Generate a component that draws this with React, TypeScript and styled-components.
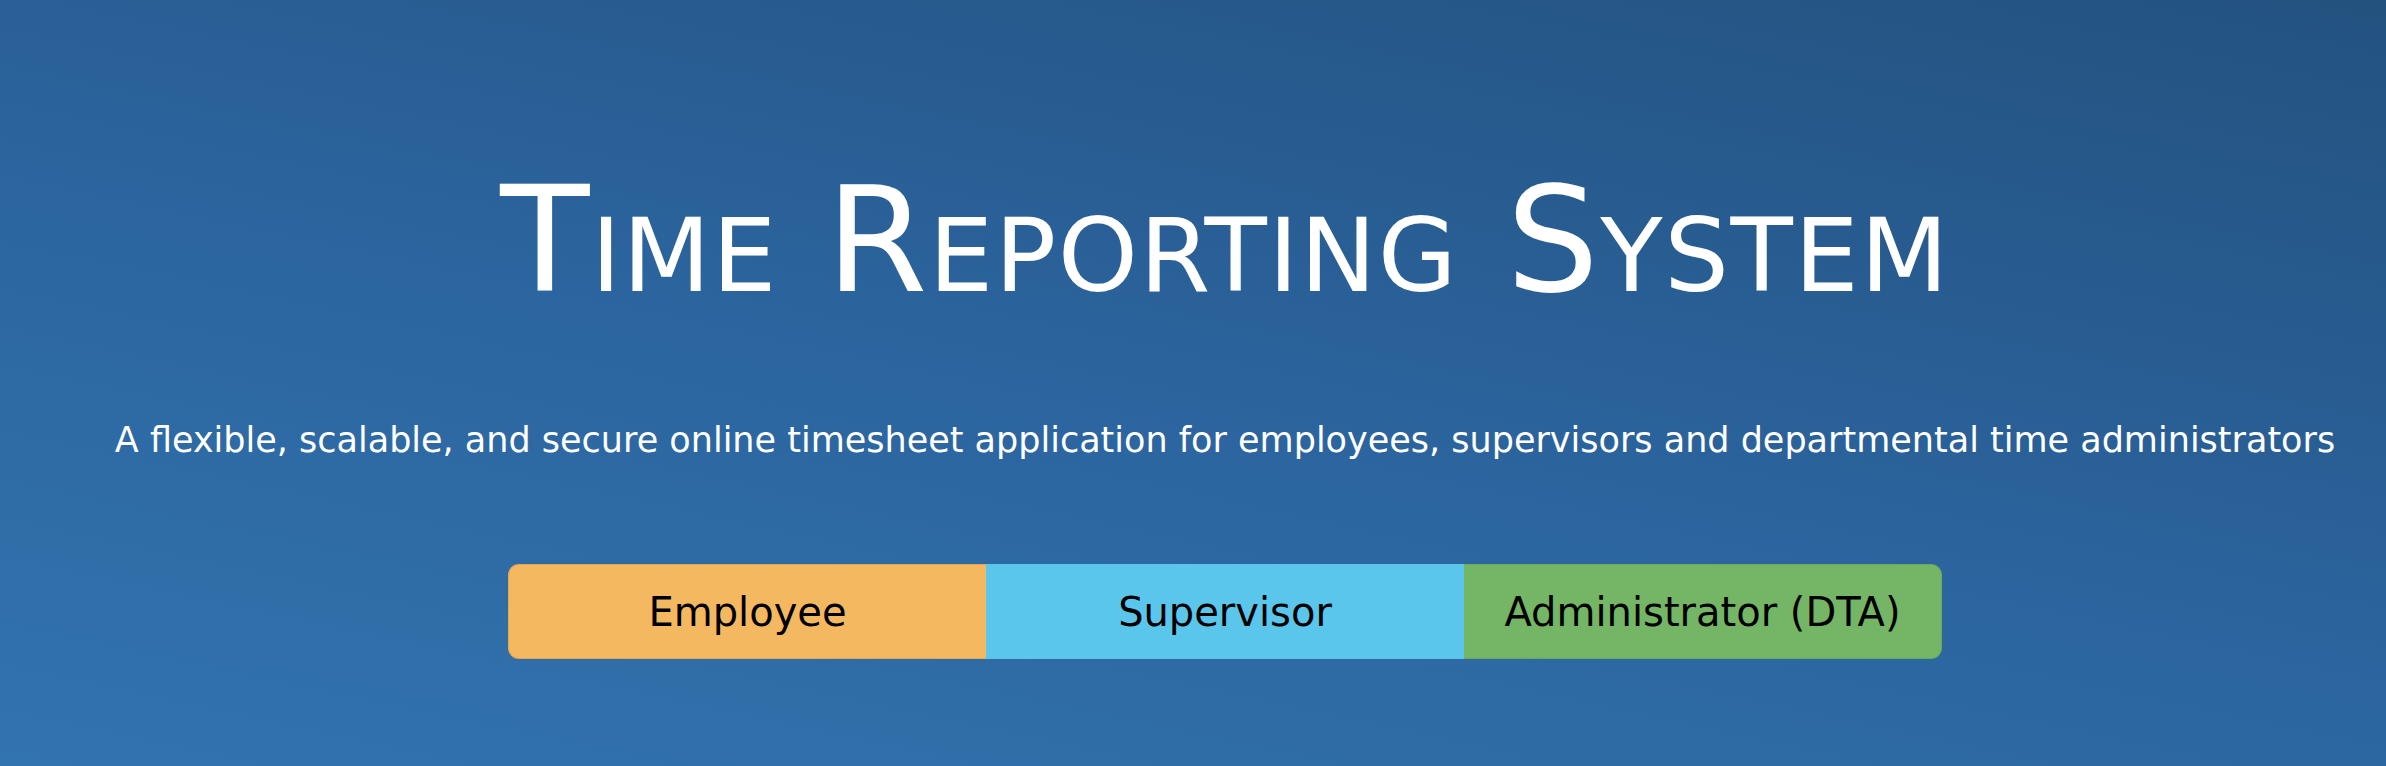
import React from 'react';
import styled, { createGlobalStyle } from 'styled-components';

const GlobalStyle = createGlobalStyle`
  html, body {
    margin: 0;
    padding: 0;
  }
  body {
    font-family: 'DejaVu Sans', Verdana, sans-serif;
  }
`;

const Page = styled.main`
  box-sizing: border-box;
  min-height: 766px;
  padding: 167px 0 0 64px;
  display: flex;
  flex-direction: column;
  align-items: center;
  color: #ffffff;
  background: linear-gradient(192deg, #23527f 0%, #2c65a0 55%, #3274ae 100%);
`;

const Title = styled.h1`
  margin: 0;
  font-size: 146px;
  font-weight: normal;
  font-variant: small-caps;
  letter-spacing: 1.5px;
  line-height: 1;
  white-space: nowrap;
`;

const Tagline = styled.p`
  margin: 110px 0 0;
  font-size: 35px;
  line-height: 1;
  white-space: nowrap;
`;

const RoleBar = styled.nav`
  margin-top: 106px;
  display: flex;
`;

type Role = 'employee' | 'supervisor' | 'admin';

const palette: Record<Role, { bg: string; edge: string }> = {
  employee: { bg: '#f4b860', edge: '#e6a74e' },
  supervisor: { bg: '#5bc6eb', edge: '#5bc6eb' },
  admin: { bg: '#74b566', edge: '#69a95b' },
};

const RoleButton = styled.a<{ $role: Role }>`
  box-sizing: border-box;
  width: 478px;
  height: 95px;
  display: flex;
  align-items: center;
  justify-content: center;
  font-size: 40px;
  color: #000000;
  text-decoration: none;
  cursor: pointer;
  background: ${({ $role }) => palette[$role].bg};
  border: 1px solid ${({ $role }) => palette[$role].edge};

  &:first-child {
    border-radius: 11px 0 0 11px;
    border-right: none;
  }
  &:last-child {
    border-radius: 0 11px 11px 0;
    border-left: none;
  }
`;

export default function App() {
  return (
    <>
      <GlobalStyle />
      <Page>
        <Title>Time Reporting System</Title>
        <Tagline>
          A flexible, scalable, and secure online timesheet application for employees, supervisors and
          departmental time administrators
        </Tagline>
        <RoleBar>
          <RoleButton $role="employee">Employee</RoleButton>
          <RoleButton $role="supervisor">Supervisor</RoleButton>
          <RoleButton $role="admin">Administrator (DTA)</RoleButton>
        </RoleBar>
      </Page>
    </>
  );
}
